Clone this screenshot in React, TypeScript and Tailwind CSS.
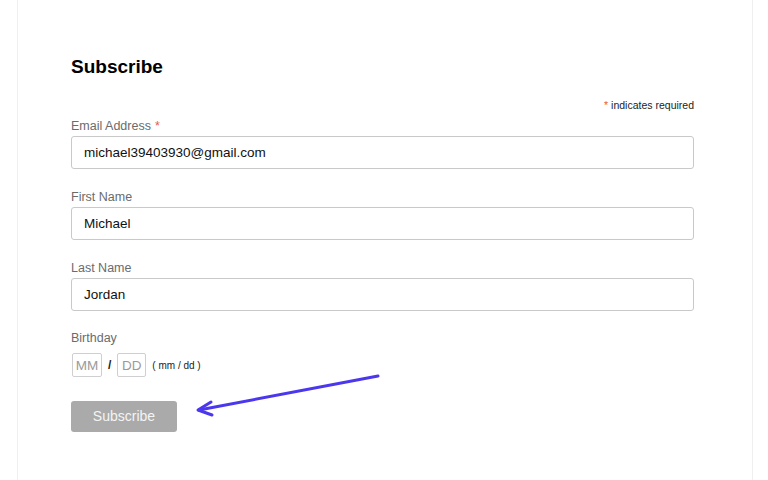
import { useState } from 'react';

const font = { fontFamily: '"Liberation Sans", Arial, Helvetica, sans-serif' };

function Field({ label, value, required }: { label: string; value: string; required?: boolean }) {
  const [val, setVal] = useState(value);
  return (
    <div className="flex flex-col">
      <label className="text-[12.5px] leading-[16px] text-[#6b6b6b]">
        {label}
        {required && <span className="ml-[4px] text-[#e85c41]">*</span>}
      </label>
      <input
        value={val}
        onChange={(e) => setVal(e.target.value)}
        className="mt-[2px] h-[33px] w-full rounded-[3px] border border-[#c9c9c9] bg-white px-[12px] text-[13.5px] text-[#111] outline-none"
        style={font}
      />
    </div>
  );
}

export default function App() {
  return (
    <div className="relative h-[480px] w-[768px] overflow-hidden bg-white" style={font}>
      <div className="ml-[17px] flex h-full w-[736px] flex-col border-x border-[#efefef] pl-[53px] pr-[58px] pt-[55px]">
        <h2 className="text-[19px] font-bold leading-[24px] text-black">Subscribe</h2>

        <div className="mt-[19px] text-right text-[10.5px] leading-[14px] text-[#222]">
          <span className="text-[#e85c41]">*</span> indicates required
        </div>

        <div className="mt-[6px] flex flex-col gap-[20px]">
          <Field label="Email Address" value="michael39403930@gmail.com" required />
          <Field label="First Name" value="Michael" />
          <Field label="Last Name" value="Jordan" />
        </div>

        <div className="mt-[19px] flex flex-col">
          <label className="text-[12.5px] leading-[16px] text-[#6b6b6b]">Birthday</label>
          <div className="mt-[7px] flex items-center">
            <input
              placeholder="MM"
              className="ml-[1px] h-[24px] w-[30px] rounded-[2px] border border-[#cfcfcf] bg-white text-center text-[13.5px] text-[#111] outline-none placeholder:text-[#9a9a9a]"
              style={font}
            />
            <span className="mx-[6px] text-[12px] font-bold text-[#222]">/</span>
            <input
              placeholder="DD"
              className="h-[24px] w-[29px] rounded-[2px] border border-[#cfcfcf] bg-white text-center text-[13.5px] text-[#111] outline-none placeholder:text-[#9a9a9a]"
              style={font}
            />
            <span className="ml-[6px] text-[10px] text-[#222]">( mm / dd )</span>
          </div>
        </div>

        <div className="mt-[24px]">
          <button
            className="h-[31px] w-[106px] rounded-[3px] bg-[#aaaaaa] text-[14px] text-[#f4f4f4]"
            style={font}
          >
            Subscribe
          </button>
        </div>
      </div>

      <svg className="pointer-events-none absolute left-0 top-0" width="768" height="480" viewBox="0 0 768 480">
        <g stroke="#4a37ee" strokeWidth="3" strokeLinecap="round" strokeLinejoin="round" fill="none">
          <line x1="378" y1="376" x2="199" y2="410" />
          <polyline points="211,402 198,410 212,415" />
        </g>
      </svg>
    </div>
  );
}
